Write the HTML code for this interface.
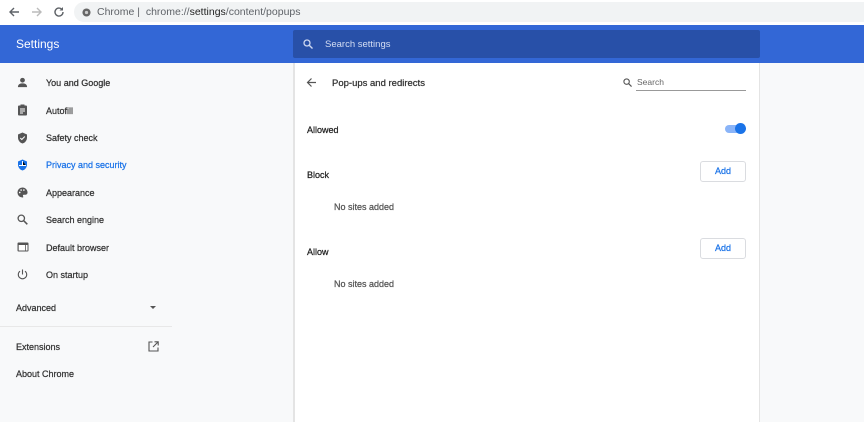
<!DOCTYPE html>
<html><head><meta charset="utf-8"><style>
*{margin:0;padding:0;box-sizing:border-box}
body{width:864px;height:422px;overflow:hidden;background:#f8f9fa;font-family:"Liberation Sans",sans-serif;font-size:9px;color:#222;position:relative;-webkit-text-stroke:0.25px}
.abs{position:absolute}
.top{left:0;top:0;width:864px;height:25px;background:#fff}
.omni{left:74px;top:2px;width:790px;height:20px;background:#f1f3f4;border-radius:10px 0 0 10px}
.hdr{left:0;top:25px;width:864px;height:38px;background:#3367d6}
.sbox{left:293px;top:30px;width:467px;height:28px;background:#2850a8;border-radius:2px}
.card{left:293px;top:63px;width:467px;height:359px;background:#fff;border-left:2px solid #e4e4e4;border-right:1px solid #e4e4e4}
.nav{left:46px;font-size:9px;color:#333}
.ic{left:17px}
.btn{width:46px;height:21px;border:1px solid #dadce0;border-radius:3px;color:#1a73e8;text-align:center;line-height:19px;background:#fff}
</style></head><body>
<div class="abs top"></div>
<div class="abs omni"></div>
<svg class="abs" style="left:8px;top:6px" width="12" height="12" viewBox="0 0 12 12"><path d="M11 6H2M6 2L2 6l4 4" stroke="#5f6368" stroke-width="1.4" fill="none"/></svg>
<svg class="abs" style="left:31px;top:6px" width="12" height="12" viewBox="0 0 12 12"><path d="M1 6h9M6 2l4 4-4 4" stroke="#bbb" stroke-width="1.4" fill="none"/></svg>
<svg class="abs" style="left:53px;top:6px" width="12" height="12" viewBox="0 0 12 12"><path d="M10 6a4 4 0 1 1-1.2-2.8" stroke="#5f6368" stroke-width="1.4" fill="none"/><path d="M10 1v3.5H6.5z" fill="#5f6368"/></svg>
<svg class="abs" style="left:82px;top:8px" width="9" height="9" viewBox="0 0 10 10"><circle cx="5" cy="5" r="4.5" fill="#666"/><circle cx="5" cy="5" r="1.8" fill="#ccc"/></svg>
<div class="abs" style="left:97px;top:6px;font-size:10.5px;color:#5f6368;-webkit-text-stroke:0">Chrome&nbsp;|&nbsp; chrome://<span style="color:#222">settings</span>/content/popups</div>
<div class="abs hdr"></div>
<div class="abs" style="left:16px;top:37px;font-size:12px;color:#fff;-webkit-text-stroke:0">Settings</div>
<div class="abs sbox"></div>
<svg class="abs" style="left:303px;top:39px" width="10" height="10" viewBox="0 0 10 10"><circle cx="4" cy="4" r="3" stroke="#cdd7f0" stroke-width="1.3" fill="none"/><path d="M6.2 6.2L9.5 9.5" stroke="#cdd7f0" stroke-width="1.4"/></svg>
<div class="abs" style="left:325px;top:39px;font-size:9.5px;color:#d5def3;-webkit-text-stroke:0">Search settings</div>

<svg class="abs ic" style="top:77px" width="11" height="11" viewBox="0 0 12 12"><circle cx="6" cy="3.5" r="2.6" fill="#555"/><path d="M1 11c0-3 2.5-4 5-4s5 1 5 4z" fill="#555"/></svg>
<div class="abs nav" style="top:78px">You and Google</div>
<svg class="abs ic" style="top:104px" width="11" height="12" viewBox="0 0 11 12"><rect x="1" y="1.5" width="9" height="10" rx="1" fill="#555"/><rect x="3.5" y="0.5" width="4" height="2" fill="#555"/><path d="M3 5h5M3 7h5M3 9h3" stroke="#fff" stroke-width=".9"/></svg>
<div class="abs nav" style="top:106px">Autofill</div>
<svg class="abs ic" style="top:132px" width="11" height="12" viewBox="0 0 11 12"><path d="M5.5 0.5L1 2.5v3c0 3 2 5.3 4.5 6 2.5-.7 4.5-3 4.5-6v-3z" fill="#555"/><path d="M3.3 6l1.5 1.5 3-3" stroke="#fff" stroke-width="1" fill="none"/></svg>
<div class="abs nav" style="top:133px">Safety check</div>
<svg class="abs ic" style="top:159px" width="11" height="12" viewBox="0 0 11 12"><path d="M5.5 0.5L1 2.5v3c0 3 2 5.3 4.5 6 2.5-.7 4.5-3 4.5-6v-3z" fill="#1a73e8"/><path d="M5.5 2v4.5H9M5.5 6.5H2" stroke="#fff" stroke-width="1"/></svg>
<div class="abs nav" style="top:160px;color:#1a73e8">Privacy and security</div>
<svg class="abs ic" style="top:187px" width="11" height="11" viewBox="0 0 12 12"><path d="M6 .5a5.5 5.5 0 0 0 0 11c1 0 1-1 .6-1.6-.4-.6 0-1.4.8-1.4H9c1.5 0 2.5-1 2.5-2.5C11.5 3 9 .5 6 .5z" fill="#555"/><circle cx="3" cy="6" r=".9" fill="#fff"/><circle cx="4.5" cy="3.3" r=".9" fill="#fff"/><circle cx="7.5" cy="3.3" r=".9" fill="#fff"/></svg>
<div class="abs nav" style="top:188px">Appearance</div>
<svg class="abs ic" style="top:214px" width="11" height="11" viewBox="0 0 11 11"><circle cx="4.3" cy="4.3" r="3.2" stroke="#555" stroke-width="1.3" fill="none"/><path d="M6.7 6.7L10.3 10.3" stroke="#555" stroke-width="1.5"/></svg>
<div class="abs nav" style="top:215px">Search engine</div>
<svg class="abs ic" style="top:242px" width="12" height="10" viewBox="0 0 12 10"><rect x=".5" y=".5" width="11" height="9" rx="1" fill="#555"/><rect x="1.7" y="3" width="6.5" height="5.5" fill="#fff"/><rect x="9" y="3" width="1.5" height="5.5" fill="#fff"/></svg>
<div class="abs nav" style="top:243px">Default browser</div>
<svg class="abs ic" style="top:269px" width="11" height="11" viewBox="0 0 11 11"><path d="M5.5 .5v5" stroke="#555" stroke-width="1.1"/><path d="M3 2.2a4.2 4.2 0 1 0 5 0" stroke="#555" stroke-width="1.1" fill="none"/></svg>
<div class="abs nav" style="top:270px">On startup</div>
<div class="abs" style="left:16px;top:303px;color:#333">Advanced</div>
<div class="abs" style="left:150px;top:306px;width:0;height:0;border-left:3px solid transparent;border-right:3px solid transparent;border-top:3px solid #555"></div>
<div class="abs" style="left:0;top:326px;width:172px;height:1px;background:#e8e8e8"></div>
<div class="abs" style="left:16px;top:342px;color:#333">Extensions</div>
<svg class="abs" style="left:148px;top:341px" width="11" height="11" viewBox="0 0 11 11"><path d="M4.5 1H1v9h9V6.5" stroke="#555" stroke-width="1.1" fill="none"/><path d="M6.5 .8h3.7v3.7M10 1L5 6" stroke="#555" stroke-width="1.1" fill="none"/></svg>
<div class="abs" style="left:16px;top:369px;color:#333">About Chrome</div>

<div class="abs card"></div>
<svg class="abs" style="left:306px;top:77px" width="11" height="11" viewBox="0 0 11 11"><path d="M10 5.5H1.5M5.5 1.5l-4 4 4 4" stroke="#555" stroke-width="1.2" fill="none"/></svg>
<div class="abs" style="left:332px;top:78px;font-size:9.5px;color:#333">Pop-ups and redirects</div>
<svg class="abs" style="left:623px;top:78px" width="9" height="9" viewBox="0 0 10 10"><circle cx="4" cy="4" r="3" stroke="#555" stroke-width="1.2" fill="none"/><path d="M6.2 6.2L9.5 9.5" stroke="#555" stroke-width="1.3"/></svg>
<div class="abs" style="left:637px;top:77px;font-size:8.5px;color:#666;-webkit-text-stroke:0">Search</div>
<div class="abs" style="left:636px;top:90px;width:110px;height:1px;background:#999"></div>
<div class="abs" style="left:307px;top:125px">Allowed</div>
<div class="abs" style="left:725px;top:125px;width:20px;height:8px;border-radius:4px;background:#8ab4f8"></div>
<div class="abs" style="left:735px;top:123px;width:11px;height:11px;border-radius:50%;background:#1a73e8"></div>
<div class="abs" style="left:307px;top:170px">Block</div>
<div class="abs btn" style="left:700px;top:161px">Add</div>
<div class="abs" style="left:334px;top:202px;color:#555">No sites added</div>
<div class="abs" style="left:307px;top:247px">Allow</div>
<div class="abs btn" style="left:700px;top:238px">Add</div>
<div class="abs" style="left:334px;top:279px;color:#555">No sites added</div>
</body></html>
